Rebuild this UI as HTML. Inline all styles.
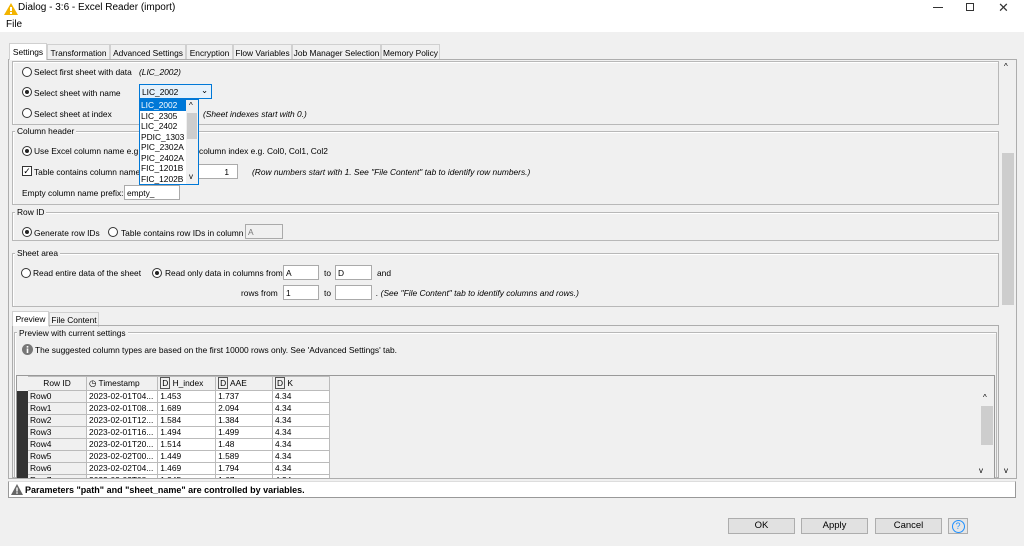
<!DOCTYPE html>
<html><head><meta charset="utf-8"><style>
*{box-sizing:border-box;margin:0;padding:0}
body{width:1024px;height:546px;background:#f0f0f0;font-family:"Liberation Sans",Arial,sans-serif;font-size:8.4px;color:#000;position:relative;overflow:hidden}
.a{position:absolute;white-space:nowrap}
.box{position:absolute;border:1px solid #b8b8b8;box-shadow:inset 1px 1px 0 #fff}
.lbl{position:absolute;background:#f0f0f0;padding:0 2px;top:-6px;left:2px}
.rad{position:absolute;width:10px;height:10px;border:1px solid #333;border-radius:50%;background:#fff}
.rad.on::after{content:"";position:absolute;left:2px;top:2px;width:4px;height:4px;border-radius:50%;background:#222}
.inp{position:absolute;background:#fff;border:1px solid #aaa;height:15px;padding:2px 2px}
.tab{position:absolute;top:44px;height:15px;border:1px solid #d0d0d0;border-bottom:none;padding:3px 0 0;text-align:center;background:#f0f0f0;overflow:hidden;white-space:nowrap}
.btn{position:absolute;top:518px;height:16px;border:1px solid #adadad;background:#e1e1e1;text-align:center;font-size:9.5px;line-height:14px}
table{border-collapse:collapse;table-layout:fixed;width:313px}
td{border:1px solid #bbb;height:12px;padding:0 2px;background:#fff;line-height:11px;overflow:hidden;white-space:nowrap}
.it{font-style:italic}
td.r{border-left:11px solid #333;background:#f0f0f0;padding-left:2px}
.d{border:1px solid #555;padding:0 1px}
</style></head><body>
<div class="a" style="left:0;top:0;width:1024px;height:32px;background:#fff"></div>
<svg class="a" style="left:4px;top:3px" width="14" height="12"><polygon points="7,0 14,12 0,12" fill="#f3b400"/><rect x="6" y="4" width="2" height="4" fill="#fff"/><rect x="6" y="9" width="2" height="2" fill="#fff"/></svg>
<div class="a" style="left:18px;top:2px;font-size:10px">Dialog - 3:6 - Excel Reader (import)</div>
<div class="a" style="left:6px;top:19px;font-size:10px">File</div>
<div class="a" style="left:933px;top:7px;width:10px;height:1px;background:#333"></div>
<div class="a" style="left:966px;top:3px;width:8px;height:8px;border:1px solid #333"></div>
<div class="a" style="left:998px;top:0px;font-size:13px;color:#333">✕</div>

<div class="tab" style="left:9px;top:43px;width:38px;height:17px;background:#fff;z-index:2">Settings</div>
<div class="tab" style="left:47px;width:63px">Transformation</div>
<div class="tab" style="left:110px;width:76px">Advanced Settings</div>
<div class="tab" style="left:186px;width:47px">Encryption</div>
<div class="tab" style="left:233px;width:59px">Flow Variables</div>
<div class="tab" style="left:292px;width:89px">Job Manager Selection</div>
<div class="tab" style="left:381px;width:59px">Memory Policy</div>
<div class="a" style="left:8px;top:59px;width:1009px;height:420px;border:1px solid #adadad;background:#f0f0f0"></div>
<div class="a" style="left:1001px;top:61px;width:14px;height:244px;background:#f0f0f0"></div>
<div class="a" style="left:1002px;top:153px;width:12px;height:152px;background:#cdcdcd"></div>
<div class="a" style="left:1004px;top:62px;font-size:8px">^</div>

<div class="box" style="left:12px;top:61px;width:987px;height:64px"></div>
<div class="rad" style="left:22px;top:67px"></div><div class="a" style="left:34px;top:67px">Select first sheet with data</div>
<div class="a it" style="left:139px;top:67px">(LIC_2002)</div>
<div class="rad on" style="left:22px;top:87px"></div><div class="a" style="left:34px;top:88px">Select sheet with name</div>
<div class="rad" style="left:22px;top:108px"></div><div class="a" style="left:34px;top:109px">Select sheet at index</div>
<div class="a it" style="left:203px;top:109px">(Sheet indexes start with 0.)</div>

<div class="box" style="left:12px;top:131px;width:987px;height:74px"><div class="lbl">Column header</div></div>
<div class="rad on" style="left:22px;top:146px"></div><div class="a" style="left:34px;top:146px">Use Excel column name e.g. A</div>
<div class="a" style="left:199px;top:146px">column index e.g. Col0, Col1, Col2</div>
<div class="a" style="left:22px;top:166px;width:10px;height:10px;border:1px solid #333;background:#fff;font-size:9px;line-height:8px;text-align:center">✓</div>
<div class="a" style="left:34px;top:167px">Table contains column names</div>
<div class="inp" style="left:198px;top:164px;width:40px;text-align:right;padding-right:8px">1</div>
<div class="a it" style="left:252px;top:167px">(Row numbers start with 1. See "File Content" tab to identify row numbers.)</div>
<div class="a" style="left:22px;top:188px">Empty column name prefix:</div>
<div class="inp" style="left:124px;top:185px;width:56px">empty_</div>

<div class="box" style="left:12px;top:212px;width:987px;height:29px"><div class="lbl">Row ID</div></div>
<div class="rad on" style="left:22px;top:227px"></div><div class="a" style="left:34px;top:228px">Generate row IDs</div>
<div class="rad" style="left:108px;top:227px"></div><div class="a" style="left:121px;top:228px">Table contains row IDs in column</div>
<div class="inp" style="left:245px;top:224px;width:38px;background:#f0f0f0;color:#777">A</div>

<div class="box" style="left:12px;top:253px;width:987px;height:54px"><div class="lbl">Sheet area</div></div>
<div class="rad" style="left:21px;top:268px"></div><div class="a" style="left:33px;top:268px">Read entire data of the sheet</div>
<div class="rad on" style="left:152px;top:268px"></div><div class="a" style="left:165px;top:268px">Read only data in columns from</div>
<div class="inp" style="left:283px;top:265px;width:36px">A</div><div class="a" style="left:324px;top:268px">to</div>
<div class="inp" style="left:335px;top:265px;width:37px">D</div><div class="a" style="left:377px;top:268px">and</div>
<div class="a" style="left:241px;top:288px">rows from</div>
<div class="inp" style="left:283px;top:285px;width:36px">1</div><div class="a" style="left:324px;top:288px">to</div>
<div class="inp" style="left:335px;top:285px;width:37px"></div>
<div class="a it" style="left:376px;top:288px">.  (See "File Content" tab to identify columns and rows.)</div>

<div class="tab" style="left:12px;top:311px;width:37px;height:15px;background:#fff;z-index:2;padding-top:2px">Preview</div>
<div class="tab" style="left:49px;top:312px;width:50px;padding-top:2px">File Content</div>
<div class="a" style="left:12px;top:325px;width:987px;height:153px;border:1px solid #adadad"></div>
<div class="box" style="left:14px;top:332px;width:983px;height:146px"><div class="lbl" style="top:-5px">Preview with current settings</div></div>
<svg class="a" style="left:22px;top:344px" width="11" height="11"><circle cx="5.5" cy="5.5" r="5.5" fill="#777"/><rect x="4.7" y="4.5" width="1.6" height="4.5" fill="#fff"/><rect x="4.7" y="2" width="1.6" height="1.6" fill="#fff"/></svg>
<div class="a" style="left:35px;top:345px">The suggested column types are based on the first 10000 rows only. See 'Advanced Settings' tab.</div>
<div class="a" style="left:16px;top:375px;width:979px;height:103px;border:1px solid #999;border-bottom:none;background:#f0f0f0;overflow:hidden">
<table style="position:absolute;left:0;top:0">
<col style="width:63px"><col style="width:70px"><col style="width:57px"><col style="width:56px"><col style="width:56px">
<tr><td style="text-align:center;background:#f0f0f0;height:14px;border-left:11px solid #f0f0f0">Row ID</td><td style="background:#f0f0f0">&#9719; Timestamp</td><td style="background:#f0f0f0"><span class="d">D</span> H_index</td><td style="background:#f0f0f0"><span class="d">D</span> AAE</td><td style="background:#f0f0f0"><span class="d">D</span> K</td></tr>
<tr><td class="r">Row0</td><td>2023-02-01T04...</td><td>1.453</td><td>1.737</td><td>4.34</td></tr>
<tr><td class="r">Row1</td><td>2023-02-01T08...</td><td>1.689</td><td>2.094</td><td>4.34</td></tr>
<tr><td class="r">Row2</td><td>2023-02-01T12...</td><td>1.584</td><td>1.384</td><td>4.34</td></tr>
<tr><td class="r">Row3</td><td>2023-02-01T16...</td><td>1.494</td><td>1.499</td><td>4.34</td></tr>
<tr><td class="r">Row4</td><td>2023-02-01T20...</td><td>1.514</td><td>1.48</td><td>4.34</td></tr>
<tr><td class="r">Row5</td><td>2023-02-02T00...</td><td>1.449</td><td>1.589</td><td>4.34</td></tr>
<tr><td class="r">Row6</td><td>2023-02-02T04...</td><td>1.469</td><td>1.794</td><td>4.34</td></tr>
<tr><td class="r">Row7</td><td>2023-02-02T08...</td><td>1.345</td><td>1.67</td><td>4.34</td></tr>
</table>
<div class="a" style="left:963px;top:16px;width:14px;height:87px;background:#f0f0f0"></div>
<div class="a" style="left:964px;top:30px;width:12px;height:39px;background:#cdcdcd"></div>
<div class="a" style="left:966px;top:17px;font-size:8px">^</div>
</div>
<div class="a" style="left:1004px;top:466px;font-size:8px">v</div>
<div class="a" style="left:979px;top:466px;font-size:8px">v</div>

<div class="a" style="left:8px;top:481px;width:1008px;height:17px;background:#fff;border:1px solid #999;border-top:1px solid #ddd"></div>
<svg class="a" style="left:11px;top:484px" width="12" height="11"><polygon points="6,0 12,11 0,11" fill="#666"/><rect x="5.3" y="3.5" width="1.4" height="4" fill="#fff"/><rect x="5.3" y="8.3" width="1.4" height="1.4" fill="#fff"/></svg>
<div class="a" style="left:25px;top:485px;font-weight:bold;font-size:9px">Parameters "path" and "sheet_name" are controlled by variables.</div>

<div class="btn" style="left:728px;width:67px">OK</div>
<div class="btn" style="left:801px;width:67px">Apply</div>
<div class="btn" style="left:875px;width:67px">Cancel</div>
<div class="btn" style="left:948px;width:20px;background:#e6e6e6"><span style="display:inline-block;width:13px;height:13px;border:1.5px solid #1e90ff;border-radius:50%;color:#1e90ff;font-size:9px;line-height:10px;margin-top:1px">?</span></div>

<div class="a" style="left:139px;top:84px;width:73px;height:15px;background:#e5f1fb;border:1px solid #0078d7;padding:2px 2px">LIC_2002<span style="position:absolute;right:3px;top:0px">&#8964;</span></div>
<div class="a" style="left:139px;top:99px;width:60px;height:86px;background:#fff;border:1px solid #0078d7;line-height:10.5px;z-index:5">
<div style="background:#0078d7;color:#fff;padding-left:1px;width:46px">LIC_2002</div>
<div style="padding-left:1px">LIC_2305</div><div style="padding-left:1px">LIC_2402</div><div style="padding-left:1px">PDIC_1303</div><div style="padding-left:1px">PIC_2302A</div><div style="padding-left:1px">PIC_2402A</div><div style="padding-left:1px">FIC_1201B</div><div style="padding-left:1px">FIC_1202B</div>
<div style="position:absolute;left:46px;top:0;width:12px;height:84px;background:#f0f0f0"></div>
<div style="position:absolute;left:47px;top:13px;width:10px;height:26px;background:#cdcdcd"></div>
<div style="position:absolute;left:49px;top:1px;font-size:8px">^</div>
<div style="position:absolute;left:49px;top:72px;font-size:8px">v</div>
</div>
</body></html>
